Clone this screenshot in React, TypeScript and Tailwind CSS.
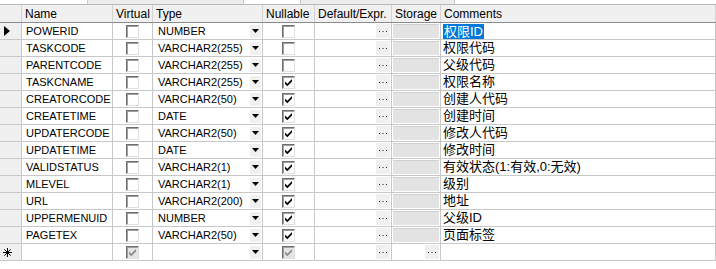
import React from 'react';

type Row = {
  name: string;
  type: string;
  nullable: boolean;
  comment: string;
};

const rows: Row[] = [
  { name: 'POWERID', type: 'NUMBER', nullable: false, comment: '权限ID' },
  { name: 'TASKCODE', type: 'VARCHAR2(255)', nullable: false, comment: '权限代码' },
  { name: 'PARENTCODE', type: 'VARCHAR2(255)', nullable: false, comment: '父级代码' },
  { name: 'TASKCNAME', type: 'VARCHAR2(255)', nullable: true, comment: '权限名称' },
  { name: 'CREATORCODE', type: 'VARCHAR2(50)', nullable: true, comment: '创建人代码' },
  { name: 'CREATETIME', type: 'DATE', nullable: true, comment: '创建时间' },
  { name: 'UPDATERCODE', type: 'VARCHAR2(50)', nullable: true, comment: '修改人代码' },
  { name: 'UPDATETIME', type: 'DATE', nullable: true, comment: '修改时间' },
  { name: 'VALIDSTATUS', type: 'VARCHAR2(1)', nullable: true, comment: '有效状态(1:有效,0:无效)' },
  { name: 'MLEVEL', type: 'VARCHAR2(1)', nullable: true, comment: '级别' },
  { name: 'URL', type: 'VARCHAR2(200)', nullable: true, comment: '地址' },
  { name: 'UPPERMENUID', type: 'NUMBER', nullable: true, comment: '父级ID' },
  { name: 'PAGETEX', type: 'VARCHAR2(50)', nullable: true, comment: '页面标签' },
];

const cols = 'grid grid-cols-[22px_91px_40px_110px_52px_77px_49px_1fr]';
const cell = 'h-[17px] border-r border-b border-[#c8c8c8] flex items-center overflow-hidden whitespace-nowrap';

function Check({ checked, disabled }: { checked: boolean; disabled?: boolean }) {
  return (
    <div
      className={`w-[13px] h-[13px] border border-t-[#6e6e6e] border-l-[#6e6e6e] border-r-[#e0e0e0] border-b-[#e0e0e0] shadow-[inset_1px_1px_0_#a0a0a0] flex items-center justify-center ${
        disabled ? 'bg-[#e4e4e4]' : 'bg-white'
      }`}
    >
      {checked && (
        <svg width="9" height="9" viewBox="0 0 9 9">
          <path d="M1 3.5 L3.3 5.8 L8 1 L8 3.5 L3.3 8.2 L1 6 Z" fill={disabled ? '#8c8c8c' : '#000'} />
        </svg>
      )}
    </div>
  );
}

function DropBtn() {
  return (
    <div className="ml-auto mr-[1px] w-[11px] h-[13px] bg-[#f0f0f0] flex items-center justify-center">
      <svg width="7" height="4" viewBox="0 0 7 4">
        <path d="M0 0 H7 L3.5 4 Z" fill="#000" />
      </svg>
    </div>
  );
}

function Dots() {
  return (
    <div className="ml-auto mr-[1px] w-[14px] h-[14px] bg-[#f0f0f0] flex items-center justify-center">
      <svg width="10" height="6" viewBox="0 0 10 6">
        <rect x="1" y="3" width="1" height="1" fill="#222" />
        <rect x="4.5" y="3" width="1" height="1" fill="#222" />
        <rect x="8" y="3" width="1" height="1" fill="#222" />
      </svg>
    </div>
  );
}

export default function App() {
  return (
    <div
      className="w-[716px] h-[269px] bg-white overflow-hidden text-[11px] text-black"
      style={{ fontFamily: '"Liberation Sans", "Noto Sans CJK SC", sans-serif' }}
    >
      {/* strip of the grid above */}
      <div className="h-[5px] flex border-b border-[#b8b8b8]">
        <div className="w-[88px] border-r border-[#c8c8c8] bg-white" />
        <div className="w-[156px] border-r border-[#c8c8c8] bg-[#ececec]" />
        <div className="w-[57px] border-r border-[#c8c8c8] bg-white" />
        <div className="w-[154px] border-r border-[#c8c8c8] bg-[#ececec]" />
        <div className="flex-1 bg-white" />
      </div>

      {/* header */}
      <div className={`${cols} bg-[#f0f0f0] border-b border-[#8c8c8c]`}>
        {['', 'Name', 'Virtual', 'Type', 'Nullable', 'Default/Expr.', 'Storage', 'Comments'].map((h, i) => (
          <div key={i} className="h-[17px] border-r border-[#d4d4d4] flex items-center pl-[3px] text-[12px]">
            {h}
          </div>
        ))}
      </div>

      {rows.map((r, i) => (
        <div key={r.name} className={cols}>
          <div className={`${cell} bg-[#f0f0f0] pl-[4px]`}>
            {i === 0 && (
              <svg width="6" height="10" viewBox="0 0 6 10">
                <path d="M0 0 L6 5 L0 10 Z" fill="#000" />
              </svg>
            )}
          </div>
          <div className={`${cell} pl-[4px]`}>{r.name}</div>
          <div className={`${cell} justify-center`}>
            <Check checked={false} />
          </div>
          <div className={`${cell} pl-[5px]`}>
            <span>{r.type}</span>
            <DropBtn />
          </div>
          <div className={`${cell} justify-center`}>
            <Check checked={r.nullable} />
          </div>
          <div className={cell}>
            <Dots />
          </div>
          <div className={`${cell} p-[1px]`}>
            <div className="w-full h-full bg-[#e3e3e3] border-t border-[#cfcfcf]" />
          </div>
          <div className={`${cell} pl-[2px] text-[13px]`}>
            {i === 0 ? <span className="bg-[#0078d7] text-white px-[1px] leading-[15px]">{r.comment}</span> : r.comment}
          </div>
        </div>
      ))}

      {/* new row */}
      <div className={cols}>
        <div className={`${cell} bg-[#f0f0f0] pl-[3px]`}>
          <svg width="9" height="9" viewBox="0 0 9 9" stroke="#000" strokeWidth="1">
            <path d="M4.5 0 V9 M0 4.5 H9 M1.3 1.3 L7.7 7.7 M7.7 1.3 L1.3 7.7" />
          </svg>
        </div>
        <div className={cell} />
        <div className={`${cell} justify-center`}>
          <Check checked disabled />
        </div>
        <div className={cell}>
          <DropBtn />
        </div>
        <div className={`${cell} justify-center`}>
          <Check checked disabled />
        </div>
        <div className={cell}>
          <Dots />
        </div>
        <div className={cell}>
          <Dots />
        </div>
        <div className={cell} />
      </div>
    </div>
  );
}
